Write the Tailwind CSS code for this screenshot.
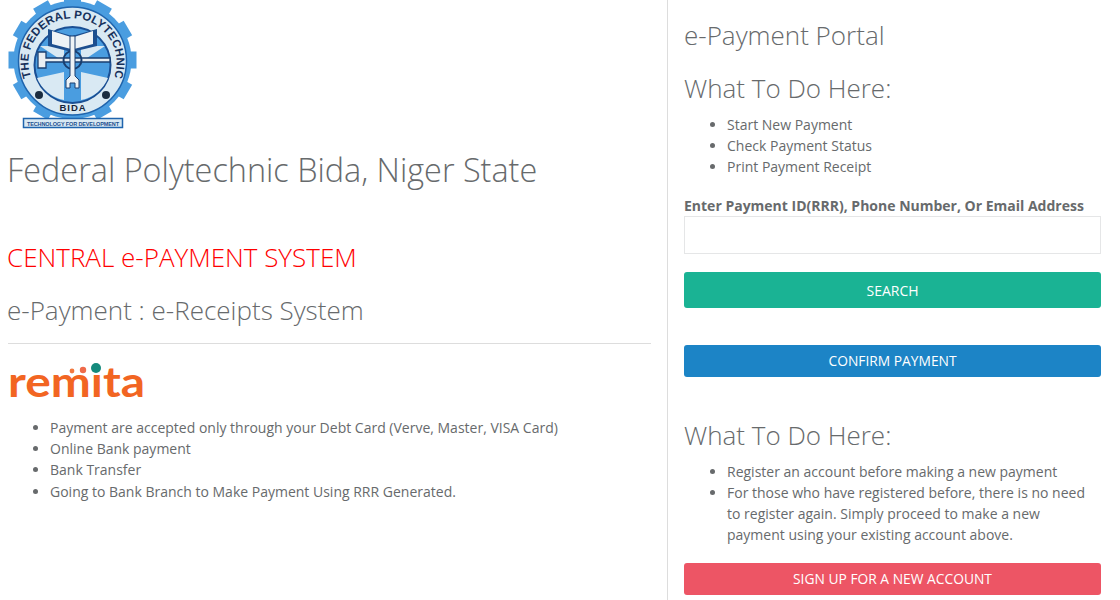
<!DOCTYPE html>
<html><head><script src="https://cdn.jsdelivr.net/npm/@tailwindcss/browser@4"></script></head>
<body class="bg-white overflow-hidden">
<div class="w-[1120px] h-[600px] overflow-hidden flex font-['Open_Sans','Noto_Sans',sans-serif] text-[#676a6c]">
  <main class="w-[667px] shrink-0 pl-[7px] pr-4 flex flex-col">
    <div class="h-[128px]">
      <svg width="131" height="129" viewBox="7 0 131 129" class="block">
        <g fill="#4a9de0">
          <g id="teeth">
            <rect x="64" y="-4" width="17" height="16"/>
            <rect x="64" y="-4" width="17" height="16" transform="rotate(30 72.500 60)"/>
            <rect x="64" y="-4" width="17" height="16" transform="rotate(60 72.500 60)"/>
            <rect x="64" y="-4" width="17" height="16" transform="rotate(90 72.500 60)"/>
            <rect x="64" y="-4" width="17" height="16" transform="rotate(120 72.500 60)"/>
            <rect x="64" y="-4" width="17" height="16" transform="rotate(150 72.500 60)"/>
            <rect x="64" y="-4" width="17" height="16" transform="rotate(210 72.500 60)"/>
            <rect x="64" y="-4" width="17" height="16" transform="rotate(240 72.500 60)"/>
            <rect x="64" y="-4" width="17" height="16" transform="rotate(270 72.500 60)"/>
            <rect x="64" y="-4" width="17" height="16" transform="rotate(300 72.500 60)"/>
            <rect x="64" y="-4" width="17" height="16" transform="rotate(330 72.500 60)"/>
          </g>
          <circle cx="72.500" cy="60" r="59"/>
        </g>
        <circle cx="72.500" cy="61" r="54" fill="#d9e9f3" stroke="#1f64ad" stroke-width="1.500"/>
        <circle cx="72.500" cy="65" r="38" fill="#4a9de0" stroke="#1a4f94" stroke-width="2"/>
        <path d="M40 46L64 62V46zM105 46L81 62V46zM37 78L64 72V100A36 36 0 0 1 37 78zM108 78L81 72V100A36 36 0 0 0 108 78z" fill="#d9e9f3"/>
        <path d="M48 29L72 36 97 29V46L72 52 48 46z" fill="#1d4f8f"/>
        <path d="M52 31L71 37V49L52 44zM93 31L74 37V49L93 44z" fill="#eef3f6"/>
        <path d="M38 52H46V58H110V62H46V68H38z" fill="#e9eef2" stroke="#1a3f70" stroke-width="1.300"/>
        <circle cx="72.500" cy="60" r="9" fill="none" stroke="#1a3f70" stroke-width="2"/>
        <path d="M70 36H75V76L79 80V88H75V83H70V88H66V80L70 76z" fill="#eef3f6" stroke="#1a3f70" stroke-width="1"/>
        <circle cx="39" cy="95" r="4" fill="#1a2c40"/><circle cx="106" cy="95" r="4" fill="#1a2c40"/>
        <text x="73" y="111" font-size="9.500" font-weight="700" text-anchor="middle" fill="#16243a" font-family="Liberation Sans" letter-spacing="1">BIDA</text>
        <path id="arc" d="M31 77A44 44 0 1 1 114 77" fill="none"/>
        <text font-size="11.500" font-weight="700" fill="#16305a" font-family="Liberation Sans"><textPath href="#arc" textLength="168">THE FEDERAL POLYTECHNIC</textPath></text>
        <rect x="23.500" y="118.500" width="99" height="9" fill="#d9e9f3" stroke="#1f64ad" stroke-width="1.500"/>
        <text x="73" y="125.500" font-size="5.500" font-weight="700" text-anchor="middle" fill="#1d4f8f" font-family="Liberation Sans" textLength="92">TECHNOLOGY FOR DEVELOPMENT</text>
      </svg>
    </div>
    <h1 class="text-[32.4px] leading-[36px] font-light mt-[23px] whitespace-nowrap">Federal Polytechnic Bida, Niger State</h1>
    <h2 class="text-[26px] leading-[30px] font-light mt-[55px] text-[#ff0000] whitespace-nowrap">CENTRAL e-PAYMENT SYSTEM</h2>
    <h2 class="text-[26px] leading-[30px] font-light mt-[23px] whitespace-nowrap">e-Payment : e-Receipts System</h2>
    <hr class="border-[#ddd] mt-[18px] ml-px"/>
    <div class="mt-[16px] h-[44px]">
      <svg width="160" height="56" viewBox="0 -6 160 56" class="block -mt-[6px]">
        <text x="1" y="37" font-family="Lato" font-weight="700" font-size="42" fill="#f26522" textLength="137" lengthAdjust="spacingAndGlyphs">remıta</text>
        <circle cx="65" cy="11" r="2.400" fill="#f2793f"/><circle cx="76" cy="10" r="3.200" fill="#ef6a4a"/><circle cx="89" cy="8" r="5" fill="#148a7c"/>
      </svg>
    </div>
    <ul class="list-disc pl-[43px] mt-[13px] text-[14px] leading-[21.2px]">
      <li>Payment are accepted only through your Debt Card (Verve, Master, VISA Card)</li>
      <li>Online Bank payment</li>
      <li>Bank Transfer</li>
      <li>Going to Bank Branch to Make Payment Using RRR Generated.</li>
    </ul>
  </main>
  <aside class="flex-1 border-l border-[#ddd] pl-4 pr-[19px]">
    <h2 class="text-[26px] leading-[30px] font-light mt-[20px]">e-Payment Portal</h2>
    <h2 class="text-[26px] leading-[30px] font-light mt-[23px]">What To Do Here:</h2>
    <ul class="list-disc pl-[43px] mt-[11px] text-[14px] leading-[21px]">
      <li>Start New Payment</li><li>Check Payment Status</li><li>Print Payment Receipt</li>
    </ul>
    <label class="block font-bold text-[14px] leading-[20px] mt-[19px] whitespace-nowrap">Enter Payment ID(RRR), Phone Number, Or Email Address</label>
    <input class="block w-full h-[38px] border border-[#e5e6e7] bg-white"/>
    <button class="block w-full h-[36px] bg-[#1ab394] text-white text-[14px] rounded-[3px] mt-[18px]">SEARCH</button>
    <button class="block w-full h-[32px] bg-[#1c84c6] text-white text-[13.8px] rounded-[3px] mt-[37px]">CONFIRM PAYMENT</button>
    <h2 class="text-[26px] leading-[30px] font-light mt-[43px]">What To Do Here:</h2>
    <ul class="list-disc pl-[43px] mt-[11px] text-[14px] leading-[21px]">
      <li>Register an account before making a new payment</li>
      <li>For those who have registered before, there is no need to register again. Simply proceed to make a new payment using your existing account above.</li>
    </ul>
    <button class="block w-full h-[32px] bg-[#ed5565] text-white text-[13.8px] rounded-[3px] mt-[18px]">SIGN UP FOR A NEW ACCOUNT</button>
  </aside>
</div>
</body></html>
